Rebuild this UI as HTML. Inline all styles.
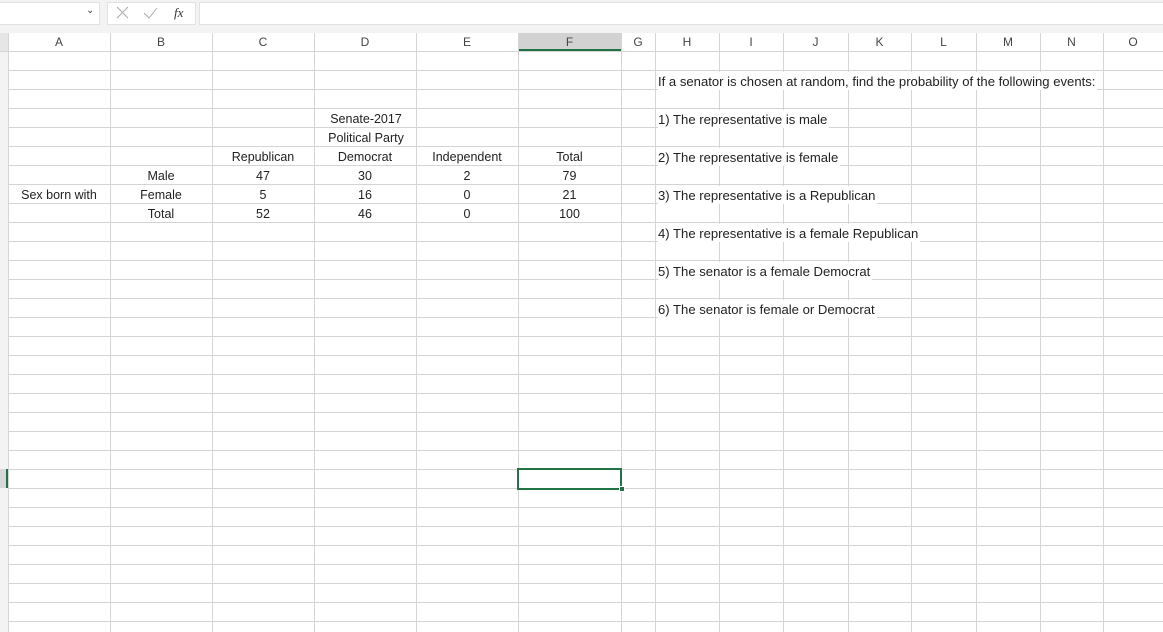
<!DOCTYPE html>
<html><head><meta charset="utf-8"><style>
body{margin:0;width:1163px;height:632px;overflow:hidden;background:#fff;font-family:"Liberation Sans",sans-serif;position:relative}
.a{position:absolute}
.v{position:absolute;top:33px;bottom:0;width:1px;background:#d4d4d4}
.hd{position:absolute;top:33px;height:18px;font-size:12px;color:#444;text-align:center;line-height:18px}
.t{position:absolute;font-size:12.5px;color:#222;line-height:19px;white-space:nowrap;margin-top:1px}
.r{font-size:13.1px}
.c{text-align:center}
</style></head><body>
<div class="a" style="left:0;top:0;width:1163px;height:33px;background:#f3f3f3"></div>
<div class="a" style="left:0;top:2px;width:99px;height:21px;background:#fff;border:1px solid #e1e1e1;border-left:none"></div>
<div class="a" style="left:86px;top:5px;font-size:10px;color:#444">&#8964;</div>
<div class="a" style="left:107px;top:2px;width:87px;height:21px;background:#fff;border:1px solid #e1e1e1"></div>
<svg class="a" style="left:115px;top:6px" width="80" height="14"><path d="M2 1L13 12M13 1L2 12" stroke="#aaa" stroke-width="1"/><path d="M29 7L34 12L42 2" stroke="#aaa" fill="none"/><text x="59" y="11" font-family="Liberation Serif" font-style="italic" font-size="13" fill="#333">fx</text></svg>
<div class="a" style="left:199px;top:2px;width:964px;height:21px;background:#fff;border:1px solid #e1e1e1"></div>
<div class="a" style="left:0;top:33px;width:1163px;height:18px;background:#fff;border-bottom:1px solid #d4d4d4"></div>
<div class="a" style="left:0;top:52px;width:8px;height:580px;background:#f3f3f3"></div>
<div class="a" style="left:0;top:33px;width:8px;height:18px;background:#e6e6e6"></div>
<div class="a" style="left:518px;top:33px;width:103px;height:16px;background:#d2d2d2;border-bottom:2px solid #217346"></div>
<div class="a" style="left:8px;top:51px;width:1155px;height:581px;background:repeating-linear-gradient(to bottom,#d4d4d4 0,#d4d4d4 1px,transparent 1px,transparent 19px)"></div>
<div class="v" style="left:8px"></div><div class="v" style="left:110px"></div><div class="v" style="left:212px"></div><div class="v" style="left:314px"></div><div class="v" style="left:416px"></div><div class="v" style="left:518px"></div><div class="v" style="left:621px"></div><div class="v" style="left:655px"></div><div class="v" style="left:719px"></div><div class="v" style="left:783px"></div><div class="v" style="left:848px"></div><div class="v" style="left:911px"></div><div class="v" style="left:976px"></div><div class="v" style="left:1040px"></div><div class="v" style="left:1103px"></div>
<div class="hd" style="left:8px;width:102px">A</div><div class="hd" style="left:110px;width:102px">B</div><div class="hd" style="left:212px;width:102px">C</div><div class="hd" style="left:314px;width:102px">D</div><div class="hd" style="left:416px;width:102px">E</div><div class="hd" style="left:518px;width:103px">F</div><div class="hd" style="left:621px;width:34px">G</div><div class="hd" style="left:655px;width:64px">H</div><div class="hd" style="left:719px;width:64px">I</div><div class="hd" style="left:783px;width:65px">J</div><div class="hd" style="left:848px;width:63px">K</div><div class="hd" style="left:911px;width:65px">L</div><div class="hd" style="left:976px;width:64px">M</div><div class="hd" style="left:1040px;width:63px">N</div><div class="hd" style="left:1103px;width:60px">O</div>
<div class="a" style="left:0;top:469px;width:8px;height:19px;background:#d8d8d8;border-right:2px solid #217346;box-sizing:border-box"></div>
<div class="a" style="left:517px;top:468px;width:101px;height:18px;border:2px solid #217346"></div>
<div class="a" style="left:619px;top:486px;width:4px;height:4px;background:#217346;border:1px solid #fff"></div>
<div class="t c" style="left:314px;width:104px;top:109px">Senate-2017</div>
<div class="t c" style="left:314px;width:104px;top:128px">Political Party</div>
<div class="t c" style="left:212px;width:102px;top:147px">Republican</div><div class="t c" style="left:314px;width:102px;top:147px">Democrat</div><div class="t c" style="left:416px;width:102px;top:147px">Independent</div><div class="t c" style="left:518px;width:103px;top:147px">Total</div>
<div class="t c" style="left:110px;width:102px;top:166px">Male</div><div class="t c" style="left:212px;width:102px;top:166px">47</div><div class="t c" style="left:314px;width:102px;top:166px">30</div><div class="t c" style="left:416px;width:102px;top:166px">2</div><div class="t c" style="left:518px;width:103px;top:166px">79</div>
<div class="t c" style="left:8px;width:102px;top:185px">Sex born with</div><div class="t c" style="left:110px;width:102px;top:185px">Female</div><div class="t c" style="left:212px;width:102px;top:185px">5</div><div class="t c" style="left:314px;width:102px;top:185px">16</div><div class="t c" style="left:416px;width:102px;top:185px">0</div><div class="t c" style="left:518px;width:103px;top:185px">21</div>
<div class="t c" style="left:110px;width:102px;top:204px">Total</div><div class="t c" style="left:212px;width:102px;top:204px">52</div><div class="t c" style="left:314px;width:102px;top:204px">46</div><div class="t c" style="left:416px;width:102px;top:204px">0</div><div class="t c" style="left:518px;width:103px;top:204px">100</div>
<div class="t r" style="left:658px;top:71px;background:#fff;padding-right:2px;height:18px">If a senator is chosen at random, find the probability of the following events:</div>
<div class="t r" style="left:658px;top:109px;background:#fff;padding-right:2px;height:18px">1) The representative is male</div>
<div class="t r" style="left:658px;top:147px;background:#fff;padding-right:2px;height:18px">2) The representative is female</div>
<div class="t r" style="left:658px;top:185px;background:#fff;padding-right:2px;height:18px">3) The representative is a Republican</div>
<div class="t r" style="left:658px;top:223px;background:#fff;padding-right:2px;height:18px">4) The representative is a female Republican</div>
<div class="t r" style="left:658px;top:261px;background:#fff;padding-right:2px;height:18px">5) The senator is a female Democrat</div>
<div class="t r" style="left:658px;top:299px;background:#fff;padding-right:2px;height:18px">6) The senator is female or Democrat</div>
</body></html>
